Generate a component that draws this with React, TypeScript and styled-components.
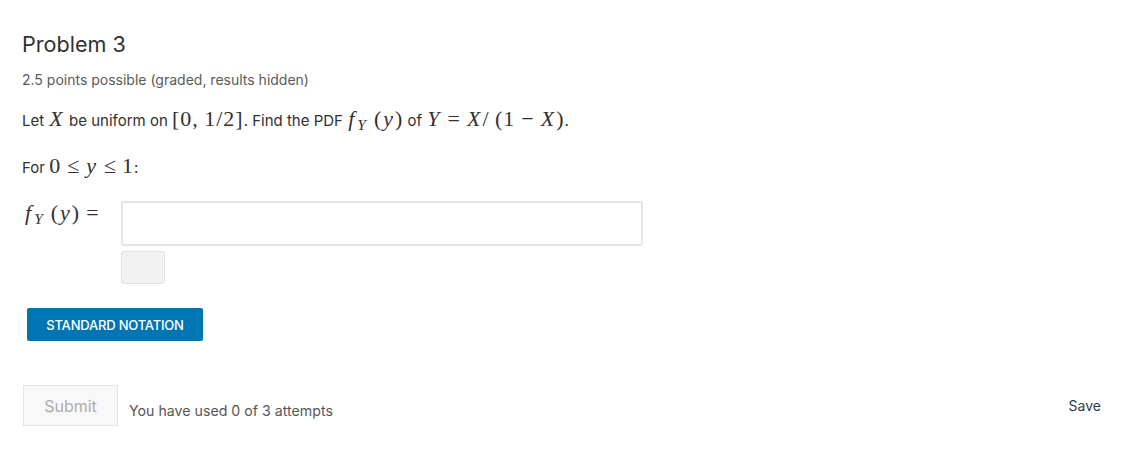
import styled, { createGlobalStyle } from "styled-components"

const GlobalStyle = createGlobalStyle`
    body {
        margin: 0;
        background: #fff;
        font-family: Inter, "Open Sans", sans-serif;
        color: #313131;
    }
`

const Page = styled.div`
    padding: 30px 22px 0 22px;
    display: flex;
    flex-direction: column;
`

const Title = styled.h3`
    margin: 0;
    font-size: 21.6px;
    font-weight: 400;
    line-height: 28px;
    color: #313131;
`

const Points = styled.div`
    margin-top: 14px;
    font-size: 14px;
    color: #5a5a5a;
    line-height: 16px;
`

const Text = styled.p<{ $top: number }>`
    margin: 0;
    font-size: 15px;
    line-height: 24px;
    color: #313131;
    margin-top: ${(p) => p.$top}px;
`

// math pieces, set in a Times-like serif in place of the TeX fonts
const M = styled.span<{ $i?: boolean }>`
    font-family: "Liberation Serif", "DejaVu Serif", serif;
    font-size: 22px;
    letter-spacing: 1px;
    font-style: ${(p) => (p.$i ? "italic" : "normal")};
    margin: 0 ${(p) => (p.$i ? "1px" : "0")};
`

const Rel = styled.span`
    font-family: "Liberation Serif", "DejaVu Serif", serif;
    font-size: 22px;
    margin: 0 6px;
`

const Bin = styled.span`
    font-family: "Liberation Serif", "DejaVu Serif", serif;
    font-size: 22px;
    margin: 0 6px;
`

const Sub = styled.span`
    font-family: "Liberation Serif", serif;
    font-style: italic;
    font-size: 15.5px;
    position: relative;
    top: 4px;
    margin-left: 1px;
    margin-right: 8px;
`

const AnswerRow = styled.div`
    display: flex;
    align-items: flex-start;
    margin-top: 21px;
`

const Label = styled.div`
    width: 99px;
    padding-left: 2px;
    line-height: 24px;
    box-sizing: border-box;
`

const Field = styled.div`
    display: flex;
    flex-direction: column;
    gap: 5px;
`

const Input = styled.div`
    width: 522px;
    height: 45px;
    box-sizing: border-box;
    border: 2px solid #e4e4e4;
    border-radius: 3px;
    background: #fff;
`

const Preview = styled.div`
    width: 44px;
    height: 33px;
    box-sizing: border-box;
    border: 1px solid #e2e2e2;
    border-radius: 3px;
    background: #f2f2f2;
`

const NotationButton = styled.button`
    margin-top: 24px;
    margin-left: 5px;
    align-self: flex-start;
    width: 176px;
    height: 33px;
    border: none;
    border-radius: 2px;
    background: #0075b4;
    color: #fff;
    font-family: Inter, sans-serif;
    font-size: 13px;
    font-weight: 500;
    letter-spacing: -0.2px;
`

const Actions = styled.div`
    display: flex;
    align-items: center;
    margin-top: 44px;
    padding-right: 17px;
`

const Submit = styled.button`
    margin-left: 1px;
    width: 95px;
    height: 41px;
    box-sizing: border-box;
    border: 1px solid #e5e5e5;
    background: #f8f8f8;
    color: #acacac;
    font-family: Inter, sans-serif;
    font-size: 16px;
    border-radius: 0;
`

const Attempts = styled.span`
    margin-left: 11px;
    margin-top: 10px;
    font-size: 14.2px;
    color: #565656;
`

const Save = styled.span`
    margin-left: auto;
    font-size: 14px;
    color: #2e3e48;
`

export default function App() {
    return (
        <>
            <GlobalStyle />
            <Page>
                <Title>Problem 3</Title>
                <Points>2.5 points possible (graded, results hidden)</Points>
                <Text $top={19}>
                    Let <M $i>X</M> be uniform on <M>[0,&thinsp;1/2]</M>. Find the PDF{" "}
                    <M $i>f</M><Sub>Y</Sub><M>(<M $i>y</M>)</M> of{" "}
                    <M $i>Y</M><Rel>=</Rel><M $i>X</M><M>/&thinsp;(1</M><Bin>−</Bin><M $i>X</M><M>)</M>.
                </Text>
                <Text $top={21}>
                    For <M>0</M><Rel>≤</Rel><M $i>y</M><Rel>≤</Rel><M>1</M>:
                </Text>
                <AnswerRow>
                    <Label>
                        <M $i>f</M><Sub>Y</Sub><M>(<M $i>y</M>)</M><Rel>=</Rel>
                    </Label>
                    <Field>
                        <Input />
                        <Preview />
                    </Field>
                </AnswerRow>
                <NotationButton>STANDARD NOTATION</NotationButton>
                <Actions>
                    <Submit>Submit</Submit>
                    <Attempts>You have used 0 of 3 attempts</Attempts>
                    <Save>Save</Save>
                </Actions>
            </Page>
        </>
    )
}
